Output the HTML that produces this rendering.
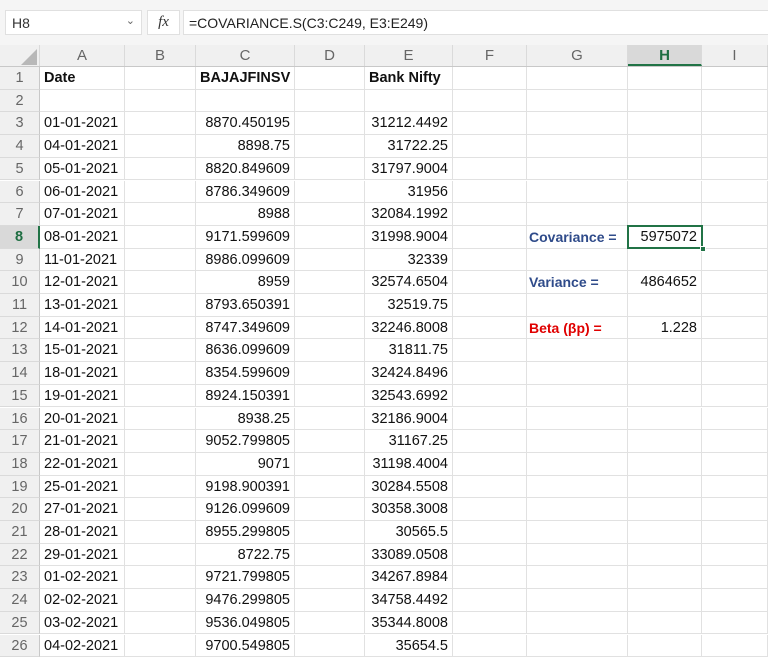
<!DOCTYPE html>
<html><head><style>
*{box-sizing:border-box;margin:0;padding:0}
body{width:768px;height:645px;overflow:hidden;background:#fff;font-family:"Liberation Sans",sans-serif;position:relative}
.top{position:absolute;left:0;top:0;width:768px;height:45px;background:#f5f5f5}
.nb{position:absolute;left:5px;top:10px;width:137px;height:25px;background:#fff;border:1px solid #e0e0e0;font-size:14px;color:#333;padding:4px 6px}
.nb span{position:absolute;right:6px;top:3px;font-size:11px;color:#666}
.fx{position:absolute;left:147px;top:10px;width:33px;height:25px;background:#fff;border:1px solid #e0e0e0;font:italic 15px "Liberation Serif",serif;text-align:center;padding-top:3px;color:#333}
.fb{position:absolute;left:183px;top:10px;width:585px;height:25px;background:#fff;border:1px solid #e0e0e0;border-right:none;font-size:14px;color:#222;padding:4px 5px}
.hdr{position:absolute;top:45px;left:0;height:22px;width:768px;background:#f0f0f0;border-bottom:1px solid #c8c8c8}
.row{position:absolute;left:0;width:768px;height:22.7px}
.c{position:absolute;top:0;height:100%;border-right:1px solid #e1e1e1;border-bottom:1px solid #e1e1e1;font-size:14.5px;line-height:23px;padding:0 4px;white-space:nowrap;color:#111}
.h{font-size:15px;color:#666;text-align:center;line-height:22px;border-right:1px solid #dadada;border-bottom:none}
.rh{background:#f0f0f0;color:#666;text-align:center;border-right:1px solid #c8c8c8;border-bottom:1px solid #dadada;width:40px;left:0}
.r{text-align:right}
.b{font-weight:bold}
</style></head><body>
<div class="top"><div class="nb">H8<span>&#8964;</span></div><div class="fx">fx</div><div class="fb">=COVARIANCE.S(C3:C249, E3:E249)</div></div>
<div class="hdr">
<div class="c h" style="left:0;width:40px;background:#f0f0f0"><svg width="20" height="20" style="position:absolute;left:18px;top:2px"><polygon points="19,2 19,18 3,18" fill="#b8b8b8"/></svg></div>
<div class="c h" style="left:40px;width:85px">A</div>
<div class="c h" style="left:125px;width:71px">B</div>
<div class="c h" style="left:196px;width:99px">C</div>
<div class="c h" style="left:295px;width:70px">D</div>
<div class="c h" style="left:365px;width:88px">E</div>
<div class="c h" style="left:453px;width:74px">F</div>
<div class="c h" style="left:527px;width:101px">G</div>
<div class="c h" style="left:628px;width:74px;background:#d9d9d9;color:#1e6e42;font-weight:bold;border-bottom:2px solid #217346">H</div>
<div class="c h" style="left:702px;width:66px">I</div>
</div>
<div id="g"></div>
<script>
(function(){
var d=[["Date","","BAJAJFINSV","","Bank Nifty"],["","","","",""],
["01-01-2021","","8870.450195","","31212.4492"],["04-01-2021","","8898.75","","31722.25"],["05-01-2021","","8820.849609","","31797.9004"],["06-01-2021","","8786.349609","","31956"],["07-01-2021","","8988","","32084.1992"],["08-01-2021","","9171.599609","","31998.9004"],["11-01-2021","","8986.099609","","32339"],["12-01-2021","","8959","","32574.6504"],["13-01-2021","","8793.650391","","32519.75"],["14-01-2021","","8747.349609","","32246.8008"],["15-01-2021","","8636.099609","","31811.75"],["18-01-2021","","8354.599609","","32424.8496"],["19-01-2021","","8924.150391","","32543.6992"],["20-01-2021","","8938.25","","32186.9004"],["21-01-2021","","9052.799805","","31167.25"],["22-01-2021","","9071","","31198.4004"],["25-01-2021","","9198.900391","","30284.5508"],["27-01-2021","","9126.099609","","30358.3008"],["28-01-2021","","8955.299805","","30565.5"],["29-01-2021","","8722.75","","33089.0508"],["01-02-2021","","9721.799805","","34267.8984"],["02-02-2021","","9476.299805","","34758.4492"],["03-02-2021","","9536.049805","","35344.8008"],["04-02-2021","","9700.549805","","35654.5"]];
var L=[40,125,196,295,365,453,527,628,702,768];
var extra={8:["Covariance =","5975072","#2f4b8a"],10:["Variance =","4864652","#2f4b8a"],12:["Beta (βp) =","1.228","#e00000"]};
var h="";
for(var i=0;i<26;i++){var n=i+1;var ty=67+i*22.7;
h+='<div class="row" style="top:'+ty+'px"><div class="c rh" style="'+(n==8?'background:#d9d9d9;color:#1e6e42;font-weight:bold;border-right:2px solid #217346':'')+'">'+n+'</div>';
for(var j=0;j<9;j++){var t="",cls="c",st="";
 if(j<5){t=d[i][j];if(n==1)cls+=" b";else if(j>0)cls+=" r";}
 if(extra[n]){if(j==6){t=extra[n][0];st="color:"+extra[n][2]+";font-weight:bold;font-size:14px;padding-left:2px;";}if(j==7){t=extra[n][1];cls+=" r";}}
 h+='<div class="'+cls+'" style="left:'+L[j]+'px;width:'+(L[j+1]-L[j])+'px;'+st+'">'+t+'</div>';}
h+='</div>';}
h+='<div style="position:absolute;left:627px;top:225px;width:76px;height:24px;border:2px solid #217346"></div><div style="position:absolute;left:700px;top:246px;width:6px;height:6px;background:#217346;border:1px solid #fff"></div>';
document.getElementById("g").innerHTML=h;
})();
</script>
</body></html>
